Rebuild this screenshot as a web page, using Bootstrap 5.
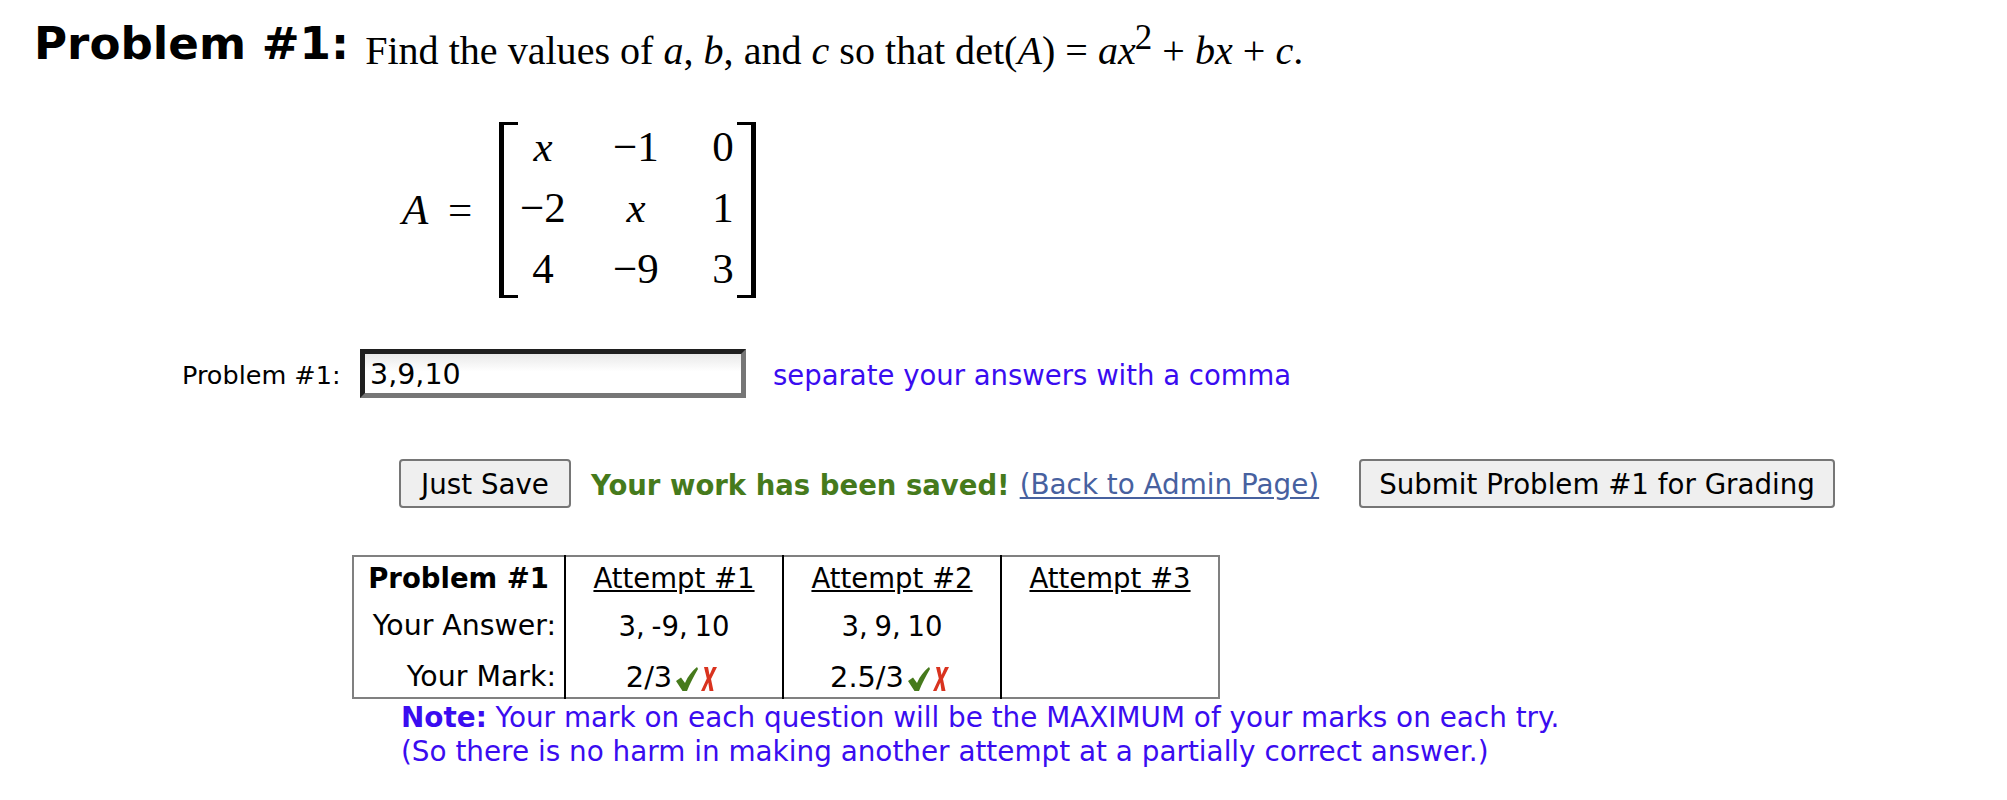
<!DOCTYPE html>
<html lang="en">
<head>
<meta charset="utf-8">
<title>Problem #1</title>
<link href="https://cdn.jsdelivr.net/npm/bootstrap@5.3.0/dist/css/bootstrap.min.css" rel="stylesheet">
<style>
html,body{background:#fff;}
body{font-family:"DejaVu Sans",Verdana,sans-serif;color:#000;font-size:27px;line-height:1.2;}
.sheet{padding:14px 0 0 34px;}
.qhead{column-gap:16px;}
.qtitle{font-family:"DejaVu Sans",sans-serif;font-weight:700;font-size:45.2px;line-height:60px;margin:0;}
.qtext{font-family:"Liberation Serif",serif;font-size:40.1px;line-height:60px;margin:0;padding-top:7px;padding-bottom:1px;}
.qtext sup{font-size:35px;top:-.42em;line-height:0;margin-left:-1px;}
.matrix-wrap{margin:40px 0 0 368px;font-family:"Liberation Serif",serif;font-size:43px;}
.matrix-lhs{width:97px;word-spacing:9px;}
.matrix{width:257px;height:176px;padding-bottom:6px;display:grid;grid-template-columns:88px 98px 76px;grid-auto-rows:61px;align-content:center;justify-content:start;text-align:center;position:relative;line-height:61px;}
.matrix::before,.matrix::after{content:"";position:absolute;top:0;bottom:0;width:19px;border-style:solid;border-color:#000;border-width:3px 0 3px 5px;}
.matrix::after{right:0;border-width:3px 5px 3px 0;}
.answer-row{margin:51px 0 0 148px;}
.answer-label{width:178px;font-size:25.5px;padding-top:3px;}
.answer-field{width:386px;height:49px;border:5px solid;border-color:#1f1f1f #767676 #767676 #1f1f1f;background:linear-gradient(#e9e9e9,#fff 45%);padding:1px 5px 0;font:28.5px "DejaVu Sans",sans-serif;color:#000;outline:0;}
.hint{margin-left:27px;color:#3a0cf0;font-size:27.5px;padding-top:3px;}
.actions{margin:61px 0 0 365px;}
.plain-btn{background:#efefef;border:2px solid #767676;border-radius:4px;color:#000;height:49px;min-width:172px;padding:3px 18px 0;font-size:27.7px;line-height:1;}
.saved{margin-left:20px;color:#467a1c;font-weight:700;font-size:27.5px;padding-top:3px;}
.back{margin-left:10px;color:#47619f;font-size:27.8px;text-decoration:underline;text-underline-offset:3px;padding-top:3px;}
.actions .btn-submit{margin-left:40px;}
.marks{margin:47px 0 0 318px;border-collapse:collapse;border:2px solid #808080;width:868px;table-layout:fixed;font-size:27.5px;}
.marks td,.marks th{padding:0;border-left:2px solid #000;text-align:center;font-weight:400;}
.marks tr:nth-child(1)>*{height:44px;}
.marks tr:nth-child(2)>*{height:50px;padding-top:3px;}
.marks tr:nth-child(3)>*{height:48px;padding-top:7px;}
.marks td:first-child,.marks th:first-child{border-left:0;text-align:right;padding-right:8px;width:212px;font-size:28.4px;}
.marks th:first-child{font-weight:700;padding-right:15px;font-size:27.5px;}
.marks th u{text-underline-offset:3px;}
.tight{word-spacing:-2px;}
.marks td.markval{font-size:28.8px;padding-right:5px;}
.tick{width:22px;height:24px;vertical-align:-4px;margin-left:4px;}
.cross{width:16px;height:24px;vertical-align:-4px;margin-left:3px;}
.note{margin:2px 0 0 367px;color:#3a0cf0;font-size:27.85px;line-height:33.5px;}
</style>
</head>
<body>
<main class="sheet">
  <div class="d-flex align-items-start qhead">
    <h1 class="qtitle">Problem #1:</h1>
    <p class="qtext">Find the values of <i>a</i>, <i>b</i>, and <i>c</i> so that det(<i>A</i>) = <i>ax</i><sup>2</sup> + <i>bx</i> + <i>c</i>.</p>
  </div>
  <div class="d-flex align-items-center matrix-wrap">
    <div class="matrix-lhs"><i>A</i> =</div>
    <div class="matrix">
      <span><i>x</i></span><span>−1</span><span>0</span>
      <span>−2</span><span><i>x</i></span><span>1</span>
      <span>4</span><span>−9</span><span>3</span>
    </div>
  </div>
  <div class="d-flex align-items-center answer-row">
    <label class="answer-label" for="ans">Problem #1:</label>
    <input id="ans" class="answer-field" type="text" value="3,9,10">
    <span class="hint">separate your answers with a comma</span>
  </div>
  <div class="d-flex align-items-center actions">
    <button class="plain-btn" type="button">Just Save</button>
    <span class="saved">Your work has been saved!</span>
    <a class="back" href="#">(Back to Admin Page)</a>
    <button class="plain-btn btn-submit" type="button">Submit Problem #1 for Grading</button>
  </div>
  <table class="marks">
    <tr><th>Problem #1</th><td><u>Attempt #1</u></td><td><u>Attempt #2</u></td><td><u>Attempt #3</u></td></tr>
    <tr><td>Your Answer:</td><td class="tight">3, -9, 10</td><td class="tight">3, 9, 10</td><td></td></tr>
    <tr><td>Your Mark:</td>
      <td class="markval">2/3<svg class="tick" viewBox="0 0 22 24"><path d="M0 14 L5 10.5 L9 16 C12 9 16 4 21 0 L22 2 C18 9 14 16 11 24 L6.5 24 Z" fill="#467a1c"/></svg><svg class="cross" viewBox="0 0 16 24"><path d="M3 0 L7 0 L8.5 8 L12 0 L16 0 L10 12 L12.5 24 L8.5 24 L7.3 15.5 L3.5 24 L0 24 L5.8 11.5 Z" fill="#d9331f"/></svg></td>
      <td class="markval">2.5/3<svg class="tick" viewBox="0 0 22 24"><path d="M0 14 L5 10.5 L9 16 C12 9 16 4 21 0 L22 2 C18 9 14 16 11 24 L6.5 24 Z" fill="#467a1c"/></svg><svg class="cross" viewBox="0 0 16 24"><path d="M3 0 L7 0 L8.5 8 L12 0 L16 0 L10 12 L12.5 24 L8.5 24 L7.3 15.5 L3.5 24 L0 24 L5.8 11.5 Z" fill="#d9331f"/></svg></td>
      <td></td></tr>
  </table>
  <p class="note"><b>Note:</b> Your mark on each question will be the MAXIMUM of your marks on each try.<br>(So there is no harm in making another attempt at a partially correct answer.)</p>
</main>
<script src="https://cdn.jsdelivr.net/npm/bootstrap@5.3.0/dist/js/bootstrap.bundle.min.js"></script>
</body>
</html>
